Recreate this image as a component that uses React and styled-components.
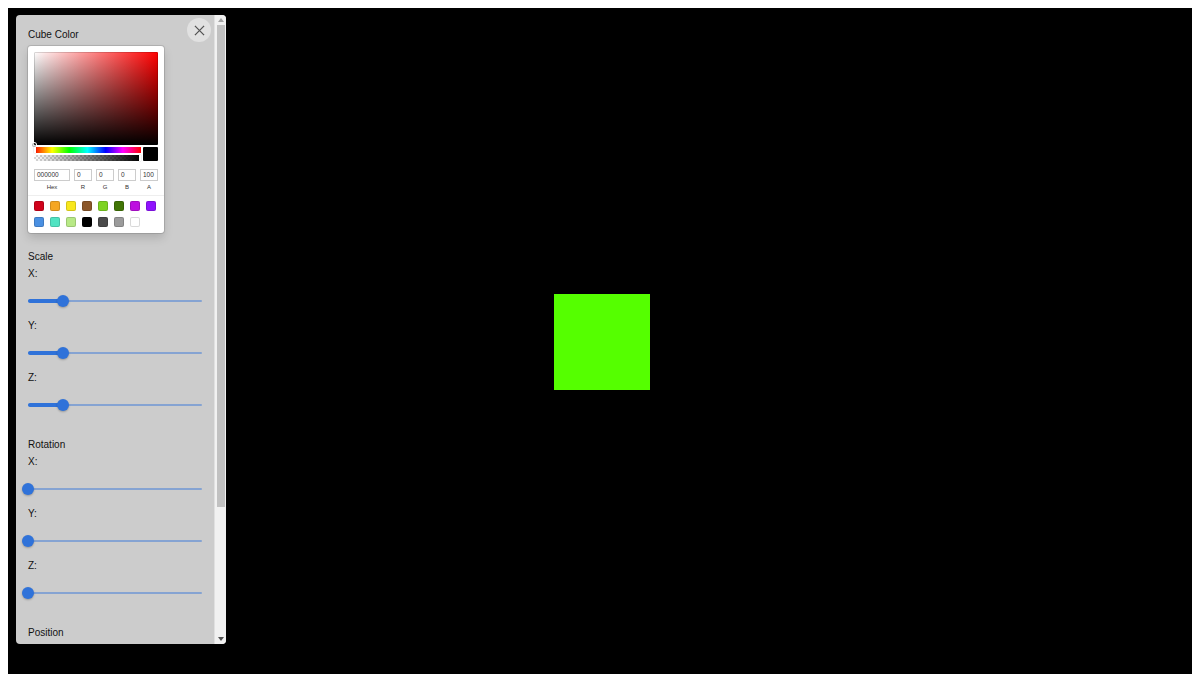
import React from "react"
import styled, { createGlobalStyle } from "styled-components"

const GlobalStyle = createGlobalStyle`
  body {
    margin: 8px;
    background: #ffffff;
    font-family: "Liberation Sans", Arial, sans-serif;
  }
`

const Stage = styled.div`
  position: relative;
  width: 1186px;
  height: 666px;
  background: #000000;
  display: flex;
  align-items: center;
  justify-content: center;
`

const Cube = styled.div`
  width: 96px;
  height: 96px;
  margin: 2px 0 0 2px;
  background: #55ff00;
`

const Panel = styled.div`
  position: absolute;
  top: 7px;
  left: 8px;
  width: 210px;
  height: 629px;
  background: #cccccc;
  border-radius: 4px;
  display: flex;
  overflow: hidden;
`

const Content = styled.div`
  position: relative;
  flex: 1;
  padding: 13px 12px 0;
  overflow: hidden;
  color: #111111;
  font-size: 10px;
`

const CloseButton = styled.button`
  position: absolute;
  top: 3px;
  right: 3px;
  width: 24px;
  height: 24px;
  border: none;
  border-radius: 50%;
  background: #e1e1e1;
  display: flex;
  align-items: center;
  justify-content: center;
  padding: 0;
  cursor: pointer;
`

const Title = styled.div`
  line-height: 14px;
  height: 14px;
  margin-top: ${({ gap }) => gap || 0}px;
`

const FieldLabel = styled.div`
  line-height: 14px;
  height: 14px;
  margin-top: 3px;
`

/* color picker */
const Picker = styled.div`
  margin-top: 4px;
  width: 124px;
  padding: 6px 6px 0;
  background: #ffffff;
  border-radius: 3px;
  box-shadow: 0 0 0 1px rgba(0, 0, 0, 0.12), 0 5px 10px rgba(0, 0, 0, 0.15);
`

const Saturation = styled.div`
  position: relative;
  height: 93px;
  border-radius: 1px;
  background: linear-gradient(to top, #000, rgba(0, 0, 0, 0)),
    linear-gradient(to right, #fff, rgba(255, 255, 255, 0)), #ff0000;
  box-shadow: inset 0 0 0 1px rgba(0, 0, 0, 0.15);
`

const SatPointer = styled.div`
  position: absolute;
  left: -2px;
  bottom: -2px;
  width: 4px;
  height: 4px;
  border-radius: 50%;
  box-shadow: 0 0 0 1px #fff, inset 0 0 1px 1px rgba(0, 0, 0, 0.3);
`

const ControlRow = styled.div`
  display: flex;
  margin-top: 2px;
`

const Bars = styled.div`
  flex: 1;
  display: flex;
  flex-direction: column;
  gap: 2px;
`

const Bar = styled.div`
  position: relative;
  height: 6px;
  background: ${({ kind }) =>
    kind === "hue"
      ? "linear-gradient(to right, #f00 0%, #ff0 17%, #0f0 33%, #0ff 50%, #00f 67%, #f0f 83%, #f00 100%)"
      : "linear-gradient(to right, rgba(0,0,0,0), #000), repeating-conic-gradient(#d6d6d6 0 25%, #fff 0 50%) 0 0 / 4px 4px"};
`

const BarPointer = styled.div`
  position: absolute;
  top: 0;
  ${({ end }) => (end ? "right: 0;" : "left: 0;")}
  width: 2px;
  height: 6px;
  background: #fff;
  box-shadow: 0 0 1px rgba(0, 0, 0, 0.6);
`

const Preview = styled.div`
  width: 15px;
  height: 14px;
  margin-left: 2px;
  background: #000;
  border-radius: 1px;
`

const Fields = styled.div`
  display: flex;
  gap: 4px;
  margin-top: 8px;
`

const Field = styled.div`
  flex: ${({ wide }) => (wide ? "0 0 36px" : "0 0 18px")};
  display: flex;
  flex-direction: column;
  align-items: stretch;
`

const FieldInput = styled.div`
  height: 12px;
  box-shadow: inset 0 0 0 1px #cccccc;
  font-size: 6.5px;
  line-height: 12px;
  padding-left: 3px;
  color: #333;
  font-family: "Liberation Sans", Arial, sans-serif;
`

const FieldName = styled.div`
  text-align: center;
  font-size: 6px;
  line-height: 8px;
  margin-top: 2px;
  color: #333;
`

const Swatches = styled.div`
  display: flex;
  flex-wrap: wrap;
  margin: 4px -6px 0;
  padding: 5px 0 0 6px;
  border-top: 1px solid #eeeeee;
`

const Swatch = styled.div`
  width: 10px;
  height: 10px;
  margin: 0 6px 6px 0;
  border-radius: 2px;
  background: ${({ color }) => color};
  box-shadow: inset 0 0 0 1px rgba(0, 0, 0, 0.15);
`

/* sliders */
const SliderWrap = styled.div`
  position: relative;
  height: 12px;
  padding: 14px 0 9px;
`

const Rail = styled.div`
  position: absolute;
  left: 0;
  right: 0;
  top: 19px;
  height: 2px;
  border-radius: 1px;
  background: #2f72d9;
  opacity: 0.45;
`

const Track = styled.div`
  position: absolute;
  left: 0;
  top: 18px;
  height: 4px;
  border-radius: 2px;
  background: #2f72d9;
`

const Thumb = styled.div`
  position: absolute;
  top: 14px;
  width: 12px;
  height: 12px;
  margin-left: -6px;
  border-radius: 50%;
  background: #2f72d9;
  box-shadow: 0 1px 2px rgba(0, 0, 0, 0.25);
`

/* scrollbar */
const Scrollbar = styled.div`
  width: 11px;
  background: #f1f1f1;
  border-left: 1px solid #e0e0e0;
  display: flex;
  flex-direction: column;
  align-items: center;
`

const Arrow = styled.div`
  height: 10px;
  display: flex;
  align-items: center;
  justify-content: center;
`

const ScrollTrack = styled.div`
  flex: 1;
  width: 100%;
  display: flex;
  justify-content: center;
`

const ScrollThumb = styled.div`
  width: 8px;
  height: 482px;
  background: #c1c1c1;
`

const SWATCHES = [
  "#D0021B", "#F5A623", "#F8E71C", "#8B572A", "#7ED321", "#417505",
  "#BD10E0", "#9013FE", "#4A90E2", "#50E3C2", "#B8E986", "#000000",
  "#4A4A4A", "#9B9B9B", "#FFFFFF",
]

const FIELDS = [
  { name: "Hex", value: "000000", wide: true },
  { name: "R", value: "0" },
  { name: "G", value: "0" },
  { name: "B", value: "0" },
  { name: "A", value: "100" },
]

const Slider = ({ value }) => (
  <SliderWrap>
    <Rail />
    <Track style={{ width: `${value}%` }} />
    <Thumb style={{ left: `${value}%` }} />
  </SliderWrap>
)

const SliderGroup = ({ title, value, gap }) => (
  <>
    <Title gap={gap}>{title}</Title>
    {["X:", "Y:", "Z:"].map(axis => (
      <React.Fragment key={axis}>
        <FieldLabel>{axis}</FieldLabel>
        <Slider value={value} />
      </React.Fragment>
    ))}
  </>
)

const ColorPicker = () => (
  <Picker>
    <Saturation>
      <SatPointer />
    </Saturation>
    <ControlRow>
      <Bars>
        <Bar kind="hue">
          <BarPointer />
        </Bar>
        <Bar kind="alpha">
          <BarPointer end />
        </Bar>
      </Bars>
      <Preview />
    </ControlRow>
    <Fields>
      {FIELDS.map(f => (
        <Field key={f.name} wide={f.wide}>
          <FieldInput>{f.value}</FieldInput>
          <FieldName>{f.name}</FieldName>
        </Field>
      ))}
    </Fields>
    <Swatches>
      {SWATCHES.map(c => (
        <Swatch key={c} color={c} />
      ))}
    </Swatches>
  </Picker>
)

export default function App() {
  return (
    <>
      <GlobalStyle />
      <Stage>
        <Cube />
        <Panel>
          <Content>
            <CloseButton>
              <svg width="11" height="11" viewBox="0 0 12 12">
                <path d="M1 1L11 11M11 1L1 11" stroke="#555" strokeWidth="1.4" />
              </svg>
            </CloseButton>
            <Title>Cube Color</Title>
            <ColorPicker />
            <SliderGroup title="Scale" value={20} gap={17} />
            <SliderGroup title="Rotation" value={0} gap={18} />
            <Title gap={18}>Position</Title>
          </Content>
          <Scrollbar>
            <Arrow>
              <svg width="6" height="4" viewBox="0 0 6 4">
                <path d="M0 4L3 0L6 4Z" fill="#a3a3a3" />
              </svg>
            </Arrow>
            <ScrollTrack>
              <ScrollThumb />
            </ScrollTrack>
            <Arrow>
              <svg width="6" height="4" viewBox="0 0 6 4">
                <path d="M0 0L6 0L3 4Z" fill="#505050" />
              </svg>
            </Arrow>
          </Scrollbar>
        </Panel>
      </Stage>
    </>
  )
}
